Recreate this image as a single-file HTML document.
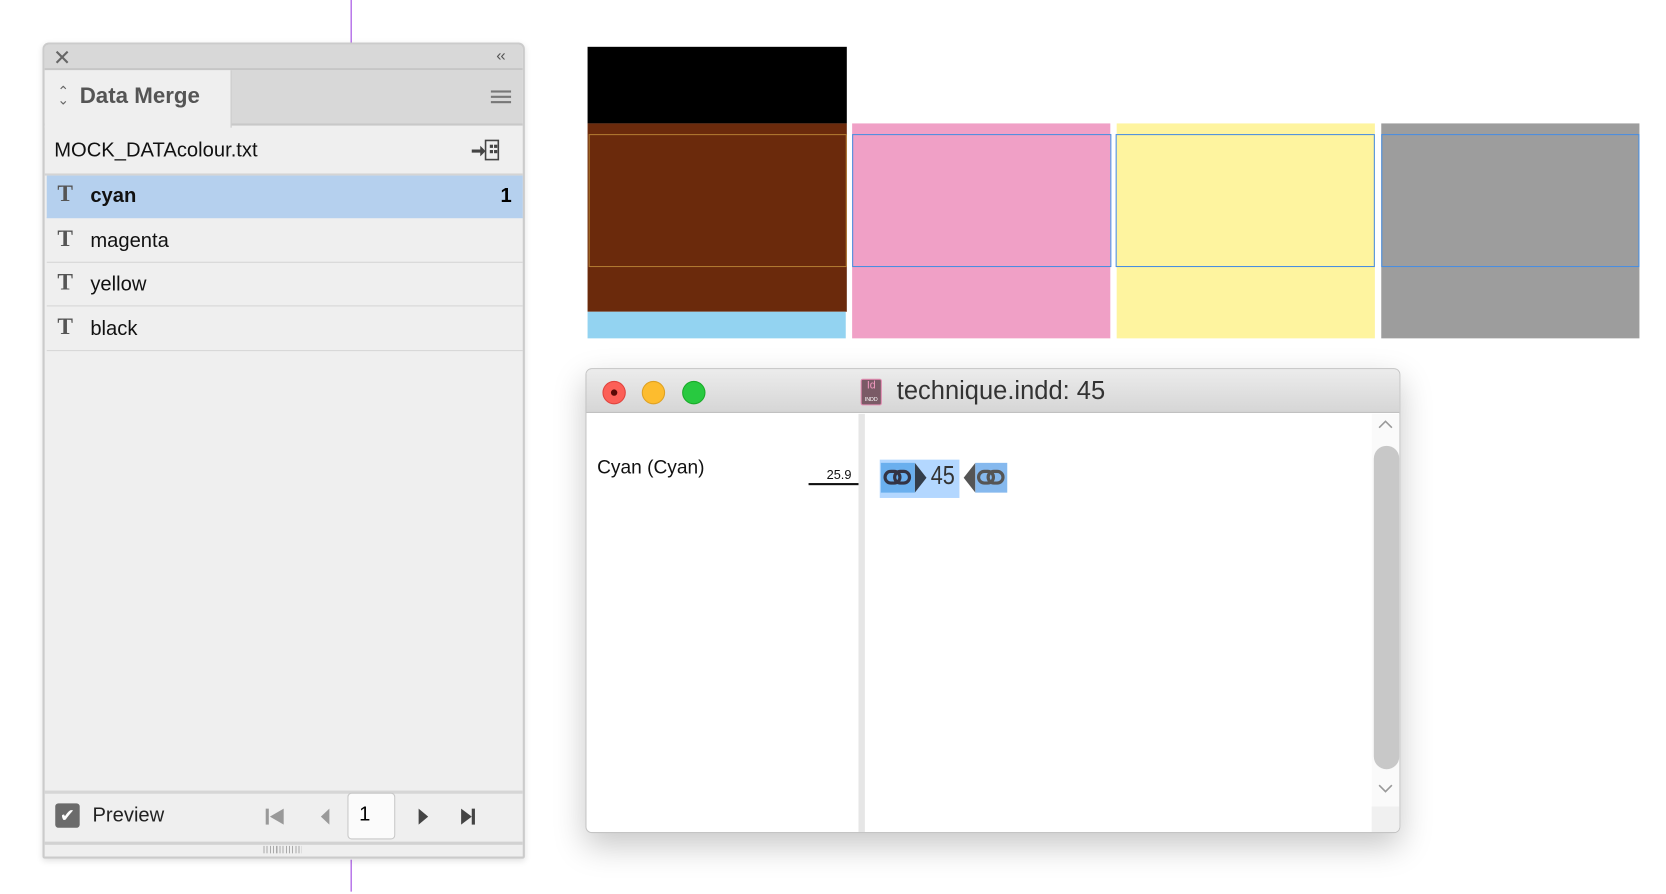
<!DOCTYPE html>
<html><head><meta charset="utf-8"><style>
*{margin:0;padding:0;box-sizing:border-box}
html,body{width:1666px;height:890px;overflow:hidden;background:#fff;font-family:"Liberation Sans",sans-serif}
#s{position:absolute;left:0;top:0;width:1570px;height:840px;transform:scale(1.0625,1.064);transform-origin:0 0}
.a{position:absolute}
.row{position:absolute;left:2px;width:450px;height:40px;border-bottom:1px solid #d6d6d6}
.row .T{position:absolute;left:10px;top:4px;font:bold 22px "Liberation Serif",serif;color:#555}
.row .l{position:absolute;left:41px;top:9px;font-size:19px;color:#111}
</style></head><body><div id="s">
<div class="a" style="left:330px;top:0;width:1px;height:40px;background:#9b3fe0"></div>
<div class="a" style="left:330px;top:808px;width:1px;height:30px;background:#9b3fe0"></div>

<div class="a" style="left:40px;top:40px;width:454px;height:767px;background:#efefef;border:2px solid #cbcbcb;border-radius:6px 6px 2px 2px;box-shadow:0 2px 6px rgba(0,0,0,.12);overflow:hidden">
 <div class="a" style="left:0;top:0;width:450px;height:24px;background:#d8d8d8;border-bottom:2px solid #c6c6c6"></div>
 <div class="a" style="left:8px;top:0px;font-size:20px;color:#666">✕</div>
 <div class="a" style="left:425px;top:2px;font-size:15px;color:#555;letter-spacing:-1px">‹‹</div>
 <div class="a" style="left:0;top:24px;width:450px;height:52px;background:#d8d8d8;border-bottom:2px solid #c8c8c8"></div>
 <div class="a" style="left:0;top:24px;width:176px;height:54px;background:#efefef;border-right:1px solid #c8c8c8"></div>
 <div class="a" style="left:12px;top:40px;font-size:13px;color:#666;line-height:8px">⌃<br>⌄</div>
 <div class="a" style="left:33px;top:37px;font-size:21px;font-weight:bold;color:#555">Data Merge</div>
 <div class="a" style="left:420px;top:43px;width:19px;height:12px;border-top:2px solid #777;border-bottom:2px solid #777"></div>
 <div class="a" style="left:420px;top:48px;width:19px;height:2px;background:#777"></div>
 <div class="a" style="left:9px;top:89px;font-size:19px;color:#111">MOCK_DATAcolour.txt</div>
 <svg class="a" style="left:400px;top:88px" width="30" height="24"><path d="M2 12h10" stroke="#444" stroke-width="3"/><path d="M10 7l5 5-5 5z" fill="#444"/><rect x="15" y="2" width="12" height="18" fill="none" stroke="#444" stroke-width="1.5"/><rect x="19" y="6" width="3" height="3" fill="#444"/><rect x="23" y="6" width="3" height="3" fill="#444"/><rect x="19" y="11" width="3" height="3" fill="#444"/><rect x="23" y="11" width="3" height="3" fill="#444"/></svg>
 <div class="a" style="left:0;top:121px;width:450px;height:2px;background:#d4d4d4"></div>
 <div class="row" style="top:123px;background:#b5d0ee;border-bottom-color:#b5d0ee"><span class="T">T</span><span class="l" style="font-weight:bold">cyan</span><span class="a" style="left:427px;top:9px;font-size:19px;font-weight:bold">1</span></div>
 <div class="row" style="top:165px"><span class="T">T</span><span class="l">magenta</span></div>
 <div class="row" style="top:206px"><span class="T">T</span><span class="l">yellow</span></div>
 <div class="row" style="top:248px"><span class="T">T</span><span class="l">black</span></div>
 <div class="a" style="left:0;top:701px;width:450px;height:3px;background:#d6d6d6"></div>
 <div class="a" style="left:10px;top:713px;width:23px;height:23px;background:#6b6b6b;border-radius:3px;color:#fff;font-size:17px;text-align:center;line-height:23px">✔</div>
 <div class="a" style="left:45px;top:714px;font-size:19px;color:#222">Preview</div>
 <svg class="a" style="left:208px;top:716px" width="200" height="20"><rect x="0" y="2" width="3" height="15" fill="#999"/><path d="M17 2v15l-13-7.5z" fill="#999"/><path d="M60 2v15l-8-7.5z" fill="#999"/><path d="M144 2v15l9-7.5z" fill="#444"/><path d="M184 2v15l10-7.5z" fill="#444"/><rect x="194" y="2" width="3" height="15" fill="#444"/></svg>
 <div class="a" style="left:285px;top:703px;width:45px;height:44px;background:#fbfbfb;border:1.5px solid #c8c8c8;border-radius:4px;font-size:19px;padding:9px 0 0 10px">1</div>
 <div class="a" style="left:0;top:749px;width:450px;height:3px;background:#d2d2d2"></div>
 <div class="a" style="left:206px;top:753px;width:36px;height:7px;background:repeating-linear-gradient(90deg,#aaa 0 1px,transparent 1px 3px)"></div>
</div>

<div class="a" style="left:553px;top:44px;width:244px;height:72px;background:#000"></div>
<div class="a" style="left:553px;top:116px;width:244px;height:177px;background:#6b2a0c"></div>
<div class="a" style="left:553px;top:293px;width:243px;height:25px;background:#93d3f1"></div>
<div class="a" style="left:802px;top:116px;width:243px;height:202px;background:#f0a0c6"></div>
<div class="a" style="left:1051px;top:116px;width:243px;height:202px;background:#fef49f"></div>
<div class="a" style="left:1300px;top:116px;width:243px;height:202px;background:#9d9d9d"></div>
<div class="a" style="left:554px;top:126px;width:243px;height:125px;border:1px solid #b07830"></div>
<div class="a" style="left:802px;top:126px;width:244px;height:125px;border:1px solid #4a8ee0"></div>
<div class="a" style="left:1050px;top:126px;width:244px;height:125px;border:1px solid #4a8ee0"></div>
<div class="a" style="left:1300px;top:126px;width:243px;height:125px;border:1px solid #4a8ee0"></div>

<div class="a" style="left:551px;top:346px;width:767px;height:437px;background:#fff;border:1px solid #c4c4c4;border-radius:6px;box-shadow:0 12px 30px rgba(0,0,0,.22);overflow:hidden">
 <div class="a" style="left:0;top:0;width:767px;height:41px;background:linear-gradient(#ececec,#d6d6d6);border-bottom:1px solid #b5b5b5"></div>
 <div class="a" style="left:15px;top:11px;width:22px;height:22px;border-radius:50%;background:#fc5f57;border:1px solid #e0443e"></div>
 <div class="a" style="left:23px;top:19px;width:6px;height:6px;border-radius:50%;background:#5a0a06"></div>
 <div class="a" style="left:52px;top:11px;width:22px;height:22px;border-radius:50%;background:#fdbc2e;border:1px solid #dea123"></div>
 <div class="a" style="left:90px;top:11px;width:22px;height:22px;border-radius:50%;background:#28c940;border:1px solid #1aab29"></div>
 <div class="a" style="left:258px;top:9px;width:20px;height:25px;background:#7a5a66;border:1px solid #e08ab0;border-radius:2px;color:#f29ac0;font-size:10px;text-align:center;line-height:12px">Id<br><span style="font-size:5px;color:#fff">INDD</span></div>
 <div class="a" style="left:292px;top:7px;font-size:24px;color:#333">technique.indd: 45</div>
 <div class="a" style="left:256px;top:42px;width:6px;height:395px;background:#e6e6e6"></div>
 <div class="a" style="left:10px;top:82px;font-size:18px;color:#111">Cyan (Cyan)</div>
 <div class="a" style="left:226px;top:92px;font-size:12px;color:#111">25.9</div>
 <div class="a" style="left:209px;top:107px;width:47px;height:2px;background:#111"></div>
 <div class="a" style="left:276px;top:85px;width:75px;height:36px;background:#b3d7ff"></div>
 <div class="a" style="left:277px;top:88px;width:32px;height:28px;background:#6aafee"></div>
 <svg class="a" style="left:279px;top:91px" width="28" height="22"><rect x="2" y="5" width="14" height="11" rx="5.5" fill="none" stroke="#334" stroke-width="3"/><rect x="11" y="5" width="14" height="11" rx="5.5" fill="none" stroke="#334" stroke-width="3"/></svg>
 <svg class="a" style="left:309px;top:88px" width="12" height="28"><path d="M0 0l11 14-11 14z" fill="#333d4a"/></svg>
 <div class="a" style="left:324px;top:87px;font-size:24px;color:#333;transform:scaleX(.85);transform-origin:0 0">45</div>
 <svg class="a" style="left:354px;top:88px" width="12" height="28"><path d="M12 0l-11 14 11 14z" fill="#555"/></svg>
 <div class="a" style="left:366px;top:88px;width:30px;height:28px;background:#86b9ee"></div>
 <svg class="a" style="left:367px;top:91px" width="28" height="22"><rect x="2" y="5" width="14" height="11" rx="5.5" fill="none" stroke="#555" stroke-width="3"/><rect x="11" y="5" width="14" height="11" rx="5.5" fill="none" stroke="#555" stroke-width="3"/></svg>
 <div class="a" style="left:739px;top:42px;width:28px;height:395px;background:#fafafa"></div>
 <div class="a" style="left:741px;top:72px;width:24px;height:304px;background:#c8c8c8;border-radius:12px"></div>
 <svg class="a" style="left:744px;top:46px" width="16" height="12"><path d="M2 9l6-6 6 6" fill="none" stroke="#999" stroke-width="1.5"/></svg>
 <svg class="a" style="left:744px;top:388px" width="16" height="12"><path d="M2 3l6 6 6-6" fill="none" stroke="#999" stroke-width="1.5"/></svg>
 <div class="a" style="left:739px;top:411px;width:28px;height:26px;background:#f0f0f0"></div>
</div>
</div></body></html>
